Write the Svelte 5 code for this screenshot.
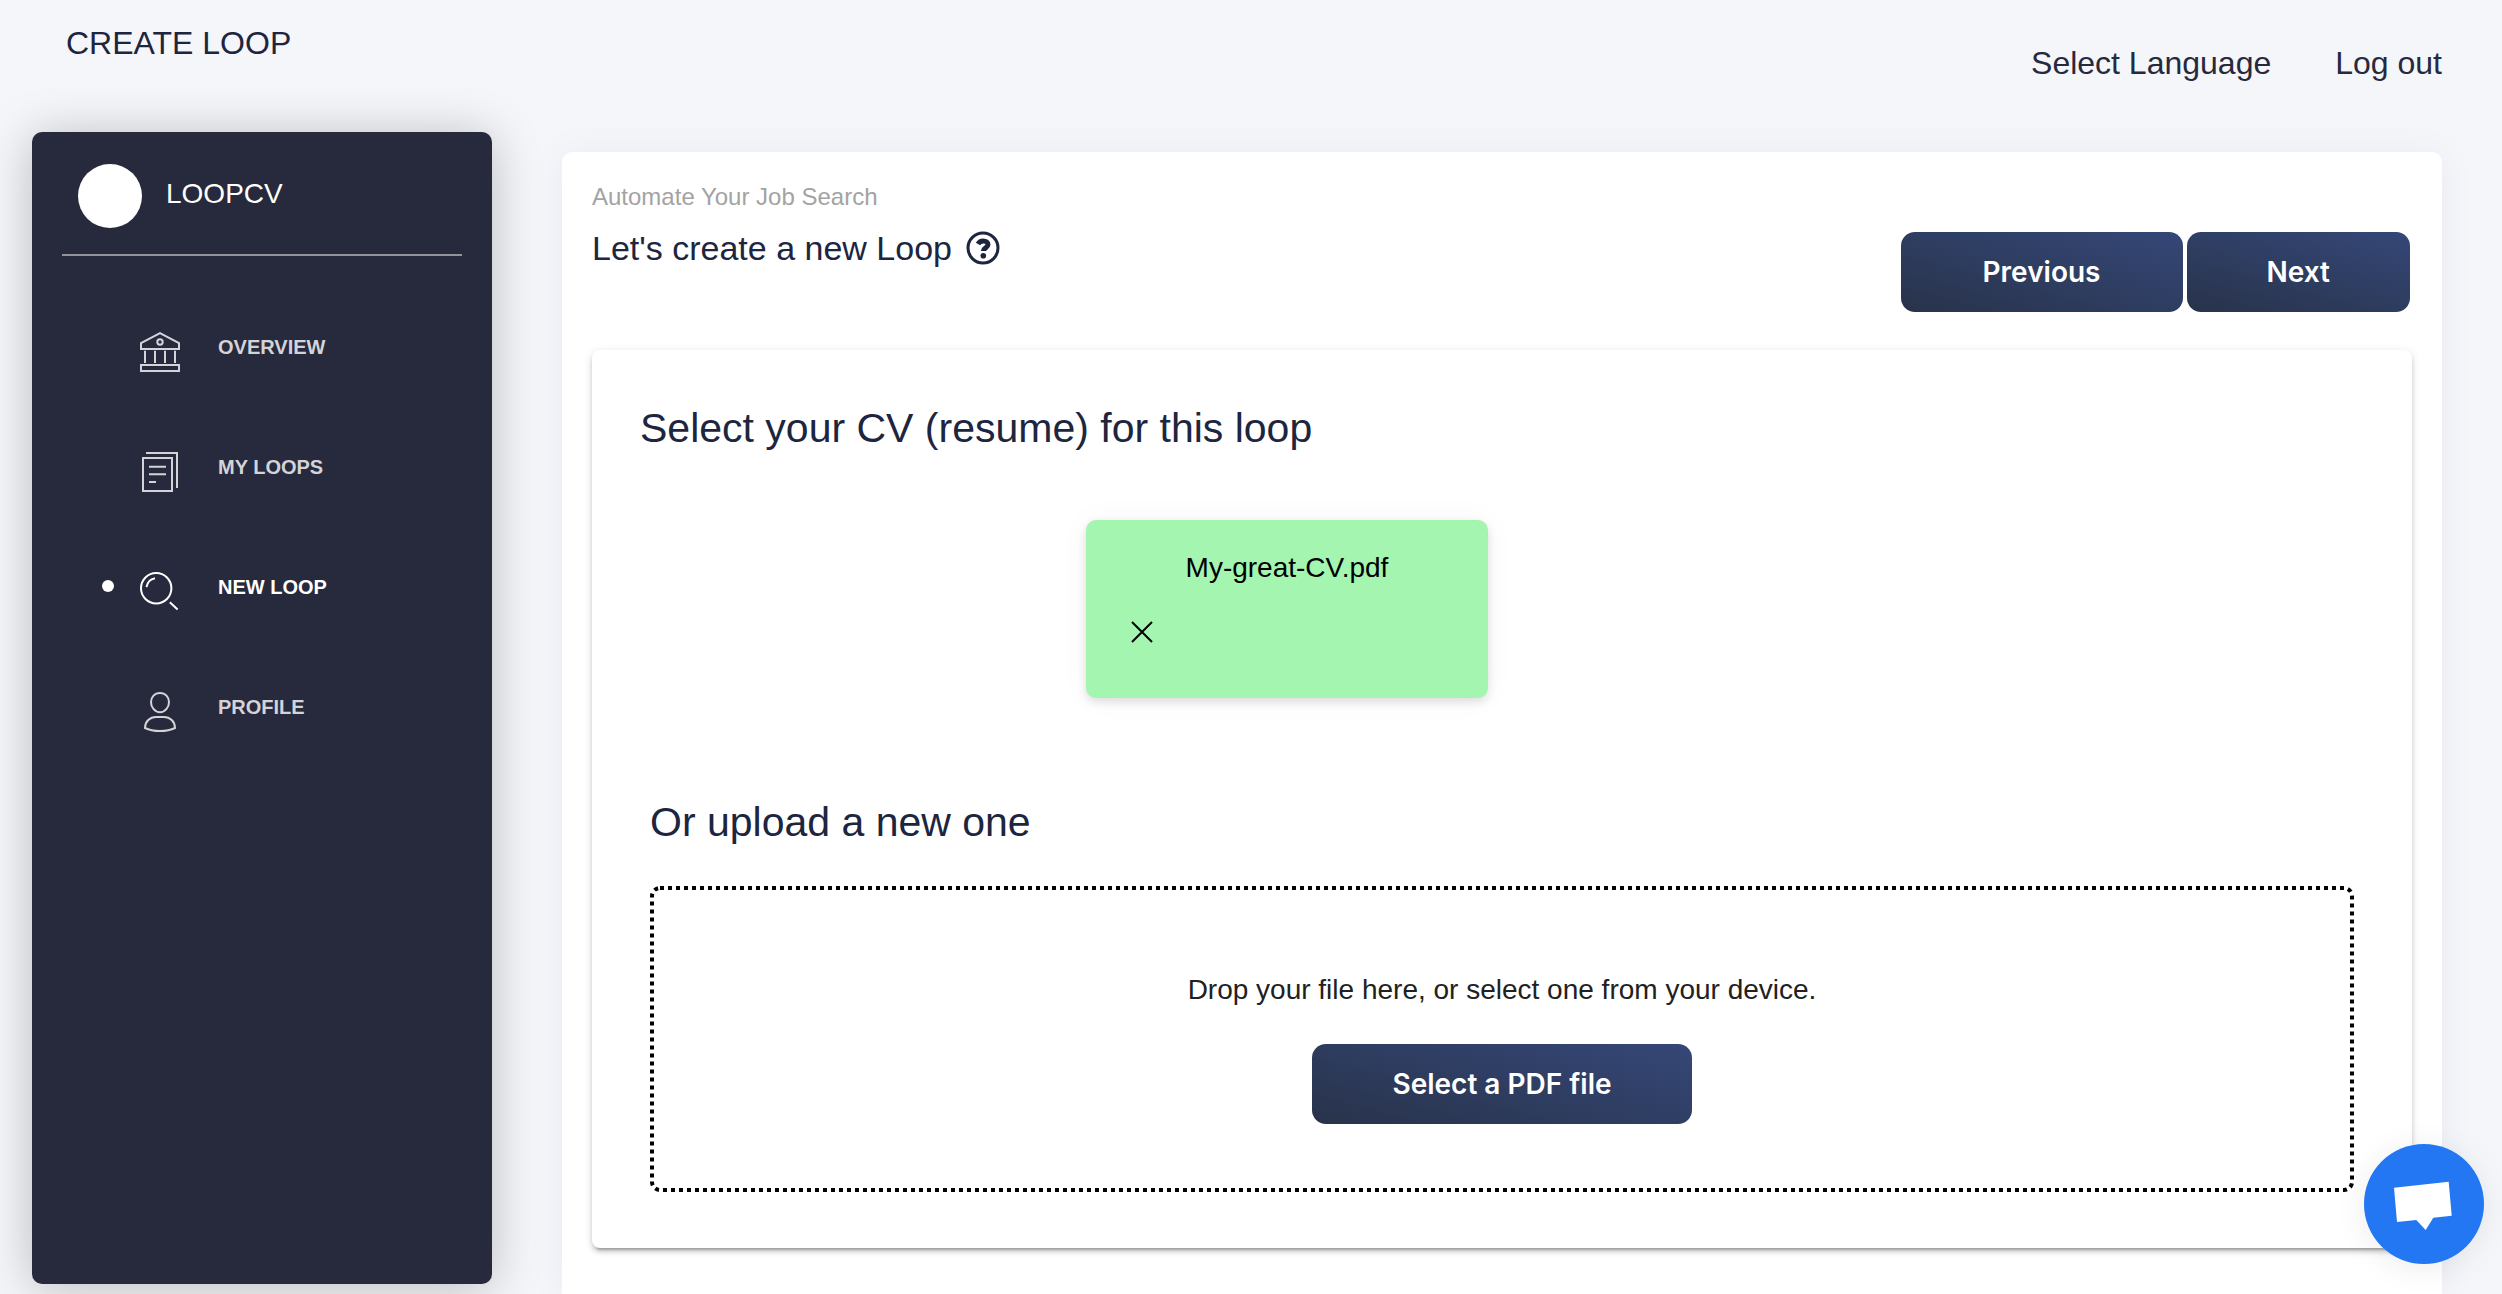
<script>
	const links = [
		{ id: 'overview', label: 'OVERVIEW' },
		{ id: 'loops', label: 'MY LOOPS' },
		{ id: 'new', label: 'NEW LOOP' },
		{ id: 'profile', label: 'PROFILE' }
	];

	let current = $state('new');
	let files = $state(['My-great-CV.pdf']);

	function removeFile(name) {
		files = files.filter((f) => f !== name);
	}
</script>

<div class="page">
	<header>
		<h1>CREATE LOOP</h1>
		<div class="actions">
			<button class="plain" type="button">Select Language</button>
			<a href="#logout">Log out</a>
		</div>
	</header>

	<div class="body">
		<aside class="sidebar">
			<div class="brand">
				<span class="avatar"></span>
				<span class="name">LOOPCV</span>
			</div>
			<nav>
				{#each links as link}
					<a
						href="#{link.id}"
						class:active={current === link.id}
						onclick={() => (current = link.id)}
					>
						<span class="dot"></span>
						<svg viewBox="0 0 40 40" aria-hidden="true">
							{#if link.id === 'overview'}
								<path d="M1 17V11L20 1.2 39 11v6z" />
								<circle cx="20" cy="10" r="2.7" />
								<path d="M5 18.7V31M15 18.7V31M25 18.7V31M35 18.7V31" />
								<rect x="1" y="33" width="38" height="6" />
							{:else if link.id === 'loops'}
								<rect x="3" y="6" width="29" height="33" />
								<path d="M6 1h31v35M9 14.7h17M9 22.3h17M9 30h7" />
							{:else if link.id === 'new'}
								<circle cx="16.2" cy="16.2" r="15.2" />
								<path d="M6.5 15.2C7.2 10.6 10.4 7 15 6.2M29.8 30.2l7.8 7.2" />
							{:else}
								<path d="M20 1c5.4 0 9 4 9 9.2s-4 10-9 10-9-4.8-9-10S14.6 1 20 1z" />
								<path d="M5 36c0-6.5 5-11 11-11h8c6 0 11 4.5 11 11-4 2-9.5 3-15 3s-11-1-15-3z" />
							{/if}
						</svg>
						<span class="label">{link.label}</span>
					</a>
				{/each}
			</nav>
		</aside>

		<main>
			<div class="head">
				<div>
					<p class="subtitle">Automate Your Job Search</p>
					<h2>
						Let's create a new Loop
						<button class="plain help" type="button" aria-label="Help">
							<svg viewBox="0 0 34 34">
								<circle cx="17" cy="17" r="15" />
								<path d="M12 13c1.2-2.2 2.8-3.1 5.2-3.1 2.900 0 4.800 1.500 4.800 3.700 0 3.300-4.600 3.200-4.600 6.400" />
								<circle class="point" cx="17.3" cy="24.8" r="2.8" />
							</svg>
						</button>
					</h2>
				</div>
				<div class="steps">
					<button class="primary back" type="button">Previous</button>
					<button class="primary" type="button">Next</button>
				</div>
			</div>

			<section class="card">
				<h3>Select your CV (resume) for this loop</h3>
				<div class="files">
					{#each files as file}
						<div class="file">
							<span>{file}</span>
							<button
								class="plain"
								type="button"
								aria-label="Remove {file}"
								onclick={() => removeFile(file)}
							>
								<svg viewBox="0 0 22 22"><path d="M1 1l20 20M21 1L1 21" /></svg>
							</button>
						</div>
					{/each}
				</div>

				<div class="upload">
					<h3>Or upload a new one</h3>
					<div class="dropzone">
						<svg class="outline" aria-hidden="true"><rect x="2" y="2" rx="8" /></svg>
						<p>Drop your file here, or select one from your device.</p>
						<button class="primary" type="button">Select a PDF file</button>
					</div>
				</div>
			</section>
		</main>
	</div>

	<button class="chat" type="button" aria-label="Open chat">
		<svg viewBox="0 0 120 120">
			<path d="M30 43.7l54.7-6 3 34-18.4 2L61.700 86l-9.400-10L33 78z" />
		</svg>
	</button>
</div>

<style>
	:global(body) {
		background: #f5f6fa;
	}
	.page {
		display: flex;
		flex-direction: column;
		min-height: 100vh;
		font-family: 'Liberation Sans', Arial, sans-serif;
		color: #1d253f;
	}
	h1,
	h2,
	h3,
	p {
		margin: 0;
		font-weight: 400;
	}
	a {
		color: inherit;
		text-decoration: none;
	}
	.plain {
		padding: 0;
		border: none;
		background: none;
		font: inherit;
		color: inherit;
		cursor: pointer;
	}

	header {
		display: flex;
		justify-content: space-between;
		height: 109px;
		padding: 23px 60px 0 66px;
		font-size: 32px;
		line-height: 40px;
	}
	h1 {
		font-size: 32px;
	}
	.actions {
		display: flex;
		align-items: flex-start;
		gap: 64px;
		padding-top: 20px;
		color: #27293d;
	}

	.body {
		display: flex;
		flex: 1;
	}
	.sidebar {
		flex: none;
		width: 460px;
		margin: 0 0 10px 32px;
		border-radius: 10px;
		background: #27293d;
		color: #fff;
		box-shadow: 0 4px 50px rgba(0, 0, 0, 0.24);
	}
	.brand {
		display: flex;
		align-items: center;
		gap: 24px;
		margin: 0 30px;
		padding: 32px 16px 26px;
		border-bottom: 2px solid #939399;
	}
	.avatar {
		width: 64px;
		height: 64px;
		border-radius: 50%;
		background: #fff;
	}
	.name {
		padding-bottom: 4px;
		font-size: 28px;
		line-height: 34px;
	}
	nav {
		padding-top: 36px;
	}
	nav a {
		display: flex;
		align-items: flex-start;
		height: 80px;
		padding: 40px 0 0 70px;
		color: #d4d4d8;
	}
	nav a.active {
		color: #fff;
	}
	.dot {
		width: 12px;
		height: 12px;
		margin: 8px 26px 0 0;
		border-radius: 50%;
	}
	.active .dot {
		background: #fff;
	}
	nav svg {
		width: 40px;
		height: 40px;
		fill: none;
		stroke: currentColor;
		stroke-width: 2;
	}
	.label {
		margin-left: 38px;
		font-size: 20px;
		line-height: 30px;
		font-weight: 700;
	}

	main {
		position: relative;
		flex: 1;
		margin: 20px 60px 0 70px;
		padding: 30px 30px 46px;
		border-radius: 10px 10px 0 0;
		background: #fff;
		box-shadow: 0 2px 40px rgba(40, 40, 90, 0.05);
		box-sizing: border-box;
	}
	.head {
		display: flex;
		justify-content: space-between;
		margin-bottom: 38px;
	}
	.subtitle {
		margin-bottom: 14px;
		font-size: 24px;
		line-height: 30px;
		color: #a3a3a3;
	}
	h2 {
		display: flex;
		align-items: center;
		gap: 14px;
		font-size: 34px;
		line-height: 44px;
	}
	.help svg {
		display: block;
		width: 34px;
		height: 34px;
		fill: none;
		stroke: currentColor;
		stroke-width: 3;
	}
	.help path {
		stroke-width: 5;
	}
	.help .point {
		fill: currentColor;
		stroke: none;
	}
	.steps {
		display: flex;
		gap: 4px;
		padding: 50px 2px 0 0;
	}
	.primary {
		height: 80px;
		padding: 0 80px;
		border: none;
		border-radius: 14px;
		background: linear-gradient(15deg, #28334a, #354778);
		color: #fff;
		font-family: Inter, sans-serif;
		font-size: 28px;
		font-weight: 600;
		cursor: pointer;
	}
	.back {
		padding: 0 82px;
	}

	.card {
		padding: 53px 48px 56px;
		border-radius: 8px;
		background: #fff;
		box-shadow:
			0 6px 2px -4px rgba(0, 0, 0, 0.2),
			0 4px 4px rgba(0, 0, 0, 0.14),
			0 2px 10px rgba(0, 0, 0, 0.12);
	}
	h3 {
		font-size: 41px;
		line-height: 50px;
	}
	.files {
		margin: 67px 0 99px 446px;
	}
	.file {
		width: 402px;
		padding: 31px 45px 55px;
		border-radius: 10px;
		background: #a3f5b0;
		box-shadow:
			0 4px 10px rgba(0, 0, 0, 0.12),
			0 0 32px rgba(0, 0, 0, 0.04);
		box-sizing: border-box;
		color: #000;
	}
	.file span {
		display: block;
		margin-bottom: 36px;
		font-size: 28px;
		line-height: 34px;
		text-align: center;
	}
	.file button {
		display: block;
	}
	.file svg {
		display: block;
		width: 22px;
		height: 22px;
		stroke: #000;
		stroke-width: 2;
	}
	.upload {
		padding: 0 10px;
	}
	.dropzone {
		position: relative;
		display: flex;
		flex-direction: column;
		align-items: center;
		gap: 37px;
		margin-top: 39px;
		padding: 87px 0 68px;
		font-size: 28px;
		line-height: 34px;
		color: #212121;
	}
	/* square dots, which a dotted border does not give */
	.outline {
		position: absolute;
		inset: 0;
		width: 100%;
		height: 100%;
		pointer-events: none;
	}
	.outline rect {
		width: calc(100% - 4px);
		height: calc(100% - 4px);
		fill: none;
		stroke: #000;
		stroke-width: 4;
		stroke-dasharray: 4 4;
	}

	.chat {
		position: fixed;
		right: 18px;
		bottom: 30px;
		width: 120px;
		height: 120px;
		padding: 0;
		border: none;
		border-radius: 50%;
		background: #2377f3;
		box-shadow: 0 4px 32px rgba(0, 0, 0, 0.08);
		cursor: pointer;
	}
	.chat svg {
		display: block;
		fill: #fff;
	}
</style>
